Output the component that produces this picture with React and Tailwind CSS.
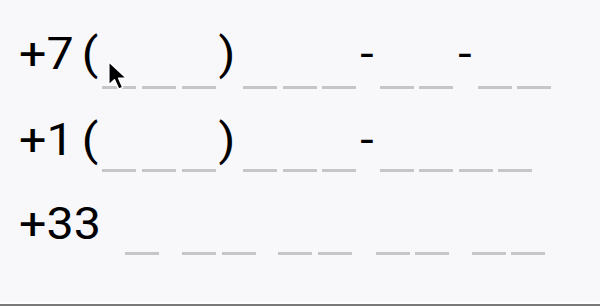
import React from "react";

const font = { fontFamily: "Roboto, 'Noto Sans', sans-serif" };

function Slot({ className = "" }) {
  return <span className={`block w-[34px] h-[3px] shrink-0 bg-[#c6c6c6] ${className}`} />;
}

function Glyph({ children, className = "" }) {
  return (
    <span className={`block shrink-0 text-center text-[44px] leading-[44px] text-black scale-x-[1.1] ${className}`}>
      {children}
    </span>
  );
}

function Cursor() {
  return (
    <svg
      className="absolute left-[107px] top-[60px]"
      width="22"
      height="31"
      viewBox="0 0 13 18.5"
    >
      <path
        d="M1 1 L1 15 L4.4 11.8 L6.9 17.4 L9.3 16.3 L6.9 10.9 L11.6 10.9 Z"
        fill="#000"
        stroke="#fff"
        strokeWidth="0.9"
        strokeLinejoin="round"
      />
    </svg>
  );
}

export default function App() {
  return (
    <div style={font} className="relative flex flex-col w-[600px] h-[306px] bg-[#f8f7fa] overflow-hidden">
      {/* +7 (___) ___-__-__ */}
      <div className="flex items-end h-[89px] pl-[19px]">
        <Glyph className="w-[58px] text-left origin-left mb-[13px]">+7</Glyph>
        <Glyph className="w-[16px] ml-[5px] mb-[13px]">(</Glyph>
        <Slot className="ml-[4px]" />
        <Slot className="ml-[6px]" />
        <Slot className="ml-[6px]" />
        <Glyph className="w-[16px] ml-[3px] mb-[13px]">)</Glyph>
        <Slot className="ml-[8px]" />
        <Slot className="ml-[6px]" />
        <Slot className="ml-[5px]" />
        <Glyph className="w-[16px] ml-[3px] mb-[13px]">-</Glyph>
        <Slot className="ml-[5px]" />
        <Slot className="ml-[5px]" />
        <Glyph className="w-[16px] ml-[4px] mb-[13px]">-</Glyph>
        <Slot className="ml-[5px]" />
        <Slot className="ml-[5px]" />
      </div>

      {/* +1 (___) ___-____ */}
      <div className="flex items-end h-[83px] pl-[19px]">
        <Glyph className="w-[58px] text-left origin-left mb-[10px]">+1</Glyph>
        <Glyph className="w-[16px] ml-[5px] mb-[10px]">(</Glyph>
        <Slot className="ml-[4px]" />
        <Slot className="ml-[6px]" />
        <Slot className="ml-[6px]" />
        <Glyph className="w-[16px] ml-[3px] mb-[10px]">)</Glyph>
        <Slot className="ml-[8px]" />
        <Slot className="ml-[6px]" />
        <Slot className="ml-[5px]" />
        <Glyph className="w-[16px] ml-[3px] mb-[10px]">-</Glyph>
        <Slot className="ml-[5px]" />
        <Slot className="ml-[5px]" />
        <Slot className="ml-[6px]" />
        <Slot className="ml-[5px]" />
      </div>

      {/* +33 _ __ __ __ __ */}
      <div className="flex items-end h-[83px] pl-[19px]">
        <Glyph className="w-[100px] text-left origin-left mb-[9px]">+33</Glyph>
        <Slot className="ml-[6px]" />
        <Slot className="ml-[23px]" />
        <Slot className="ml-[6px]" />
        <Slot className="ml-[22px]" />
        <Slot className="ml-[6px]" />
        <Slot className="ml-[24px]" />
        <Slot className="ml-[5px]" />
        <Slot className="ml-[23px]" />
        <Slot className="ml-[5px]" />
      </div>

      <div className="flex-1" />
      <div className="h-[2px] bg-white" />
      <div className="h-[2px] bg-[#7a7a7a]" />

      <Cursor />
    </div>
  );
}
